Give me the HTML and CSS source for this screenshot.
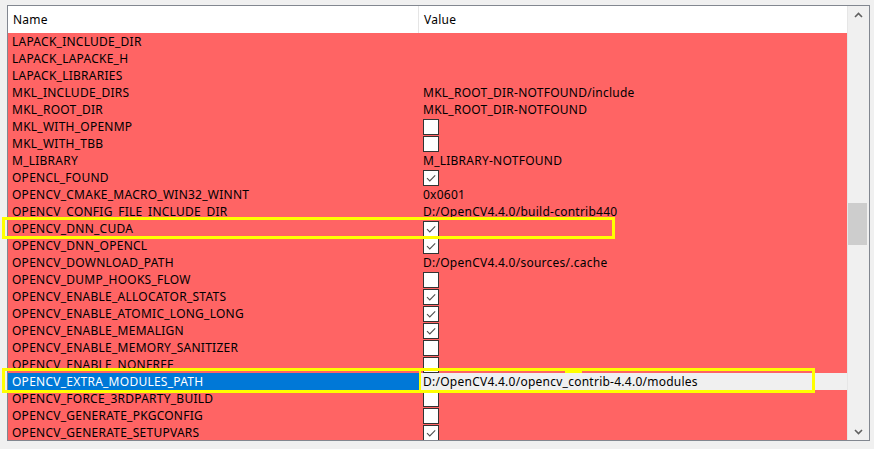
FILE: index.html
```html
<!DOCTYPE html>
<html>
<head>
<meta charset="utf-8">
<link rel="stylesheet" href="styles.css">
</head>
<body>
<div class="frame">
  <div class="list">
    <div class="header">
      <div class="hcell name">Name</div>
      <div class="hcell value">Value</div>
    </div>
    <div class="rows">
      <div class="row"><div class="cell name">LAPACK_INCLUDE_DIR</div><div class="cell value"></div></div>
      <div class="row"><div class="cell name">LAPACK_LAPACKE_H</div><div class="cell value"></div></div>
      <div class="row"><div class="cell name">LAPACK_LIBRARIES</div><div class="cell value"></div></div>
      <div class="row"><div class="cell name">MKL_INCLUDE_DIRS</div><div class="cell value">MKL_ROOT_DIR-NOTFOUND/include</div></div>
      <div class="row"><div class="cell name">MKL_ROOT_DIR</div><div class="cell value">MKL_ROOT_DIR-NOTFOUND</div></div>
      <div class="row"><div class="cell name">MKL_WITH_OPENMP</div><div class="cell value"><span class="cb"></span></div></div>
      <div class="row"><div class="cell name">MKL_WITH_TBB</div><div class="cell value"><span class="cb"></span></div></div>
      <div class="row"><div class="cell name">M_LIBRARY</div><div class="cell value">M_LIBRARY-NOTFOUND</div></div>
      <div class="row"><div class="cell name">OPENCL_FOUND</div><div class="cell value"><span class="cb"><svg viewBox="0 0 14 14"><path d="M3 7.2 L5.8 10 L11.2 4.4"/></svg></span></div></div>
      <div class="row"><div class="cell name">OPENCV_CMAKE_MACRO_WIN32_WINNT</div><div class="cell value">0x0601</div></div>
      <div class="row"><div class="cell name">OPENCV_CONFIG_FILE_INCLUDE_DIR</div><div class="cell value">D:/OpenCV4.4.0/build-contrib440</div></div>
      <div class="row"><div class="cell name">OPENCV_DNN_CUDA</div><div class="cell value"><span class="cb"><svg viewBox="0 0 14 14"><path d="M3 7.2 L5.8 10 L11.2 4.4"/></svg></span></div></div>
      <div class="row"><div class="cell name">OPENCV_DNN_OPENCL</div><div class="cell value"><span class="cb"><svg viewBox="0 0 14 14"><path d="M3 7.2 L5.8 10 L11.2 4.4"/></svg></span></div></div>
      <div class="row"><div class="cell name">OPENCV_DOWNLOAD_PATH</div><div class="cell value">D:/OpenCV4.4.0/sources/.cache</div></div>
      <div class="row"><div class="cell name">OPENCV_DUMP_HOOKS_FLOW</div><div class="cell value"><span class="cb"></span></div></div>
      <div class="row"><div class="cell name">OPENCV_ENABLE_ALLOCATOR_STATS</div><div class="cell value"><span class="cb"><svg viewBox="0 0 14 14"><path d="M3 7.2 L5.8 10 L11.2 4.4"/></svg></span></div></div>
      <div class="row"><div class="cell name">OPENCV_ENABLE_ATOMIC_LONG_LONG</div><div class="cell value"><span class="cb"><svg viewBox="0 0 14 14"><path d="M3 7.2 L5.8 10 L11.2 4.4"/></svg></span></div></div>
      <div class="row"><div class="cell name">OPENCV_ENABLE_MEMALIGN</div><div class="cell value"><span class="cb"><svg viewBox="0 0 14 14"><path d="M3 7.2 L5.8 10 L11.2 4.4"/></svg></span></div></div>
      <div class="row"><div class="cell name">OPENCV_ENABLE_MEMORY_SANITIZER</div><div class="cell value"><span class="cb"></span></div></div>
      <div class="row"><div class="cell name">OPENCV_ENABLE_NONFREE</div><div class="cell value"><span class="cb"></span></div></div>
      <div class="row selected"><div class="cell name">OPENCV_EXTRA_MODULES_PATH</div><div class="cell value">D:/OpenCV4.4.0/opencv_contrib-4.4.0/modules</div></div>
      <div class="row"><div class="cell name">OPENCV_FORCE_3RDPARTY_BUILD</div><div class="cell value"><span class="cb"></span></div></div>
      <div class="row"><div class="cell name">OPENCV_GENERATE_PKGCONFIG</div><div class="cell value"><span class="cb"></span></div></div>
      <div class="row"><div class="cell name">OPENCV_GENERATE_SETUPVARS</div><div class="cell value"><span class="cb"><svg viewBox="0 0 14 14"><path d="M3 7.2 L5.8 10 L11.2 4.4"/></svg></span></div></div>
    </div>
  </div>
  <div class="scrollbar">
    <div class="sbtn"><svg viewBox="0 0 9 6"><path d="M1 5 L4.5 1.5 L8 5"/></svg></div>
    <div class="track"><div class="thumb"></div></div>
    <div class="sbtn"><svg viewBox="0 0 9 6"><path d="M1 1 L4.5 4.5 L8 1"/></svg></div>
  </div>
</div>
<div class="mark mark-cuda"></div>
<div class="mark mark-extra"></div>
<div class="mark-divider"></div>
<div class="mark-bump"></div>
</body>
</html>
```

FILE: styles.css
```css
html, body {
  margin: 0;
  padding: 0;
  background: #f0f0f0;
  font-family: "Noto Sans", "Segoe UI", "Noto Sans CJK SC", sans-serif;
  font-size: 12px;
  letter-spacing: 0.25px;
  color: #000;
}

.frame {
  position: relative;
  margin: 5px 0 0 7px;
  width: 861px;
  height: 434px;
  border: 1px solid #828790;
  display: flex;
  background: #fff;
  overflow: hidden;
}

.list {
  width: 840px;
  display: flex;
  flex-direction: column;
  overflow: hidden;
}

.header {
  height: 27px;
  flex: none;
  display: flex;
  background: #fff;
}

.hcell {
  display: flex;
  align-items: center;
  height: 27px;
  box-sizing: border-box;
}

.hcell.name {
  width: 411px;
  padding-left: 5px;
  border-right: 1px solid #e5e5e5;
}

.hcell.value {
  padding-left: 5px;
}

.rows {
  background: #ff6464;
  flex: 1;
  overflow: hidden;
}

.row {
  height: 17px;
  display: flex;
}

.cell {
  display: flex;
  align-items: center;
  height: 17px;
  box-sizing: border-box;
  white-space: nowrap;
  line-height: 17px;
}

.cell.name {
  width: 411px;
  padding-left: 4px;
}

.cell.value {
  flex: 1;
  padding-left: 4px;
}

.row.selected .cell.name {
  background: #0078d7;
  color: #fff;
}

.row.selected .cell.value {
  background: #f0f0f0;
}

.cb {
  width: 14px;
  height: 14px;
  border: 1px solid #333;
  background: #fff;
  display: block;
}

.cb svg {
  width: 14px;
  height: 14px;
  display: block;
}

.cb path {
  fill: none;
  stroke: #505050;
  stroke-width: 1.1;
}

.scrollbar {
  width: 21px;
  background: #f0f0f0;
  border-left: 1px solid #e6e6e6;
  display: flex;
  flex-direction: column;
}

.sbtn {
  height: 17px;
  display: flex;
  align-items: center;
  justify-content: center;
}

.sbtn svg {
  width: 9px;
  height: 6px;
}

.sbtn path {
  fill: none;
  stroke: #606060;
  stroke-width: 1.6;
}

.track {
  flex: 1;
}

.thumb {
  margin: 180px 0 0 0;
  width: 19px;
  height: 42px;
  background: #cdcdcd;
}

.mark {
  position: absolute;
  border: 3px solid #ffff00;
  box-sizing: border-box;
}

.mark-cuda {
  left: 2px;
  top: 217px;
  width: 613px;
  height: 22px;
}

.mark-extra {
  left: 2px;
  top: 368px;
  width: 813px;
  height: 25px;
}

.mark-divider {
  position: absolute;
  left: 419px;
  top: 370px;
  width: 2px;
  height: 21px;
  background: #ffff00;
}

.mark-bump {
  position: absolute;
  left: 565px;
  top: 370px;
  width: 17px;
  height: 3px;
  background: #ffff00;
}
```
